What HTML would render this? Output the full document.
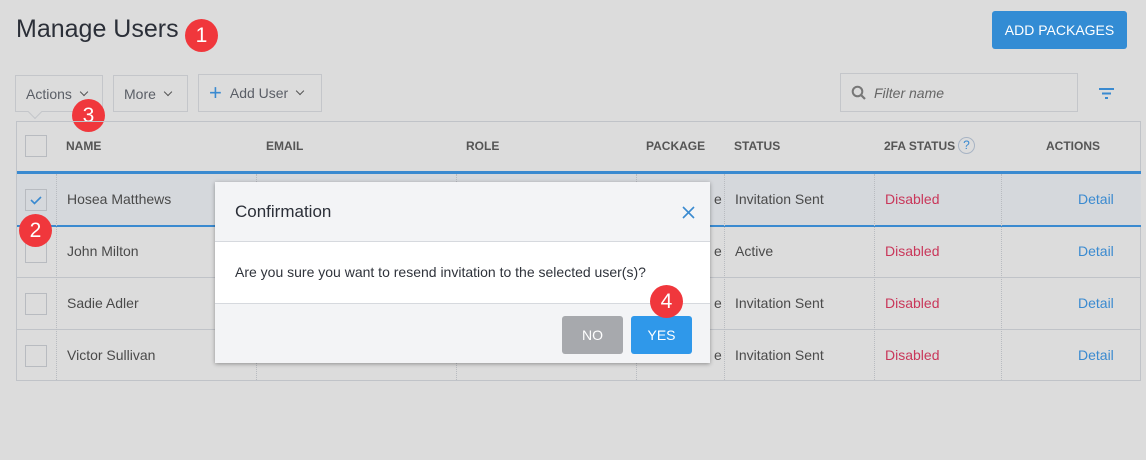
<!DOCTYPE html>
<html><head><style>
*{box-sizing:border-box;margin:0;padding:0}
body{width:1146px;height:460px;background:#dcdcdc;font-family:"Liberation Sans",sans-serif;position:relative;overflow:hidden;color:#4a4a4a}
.a{position:absolute}
.btn{position:absolute;border:1px solid #c4c6ca;height:37px;font-size:14px;color:#5a5e66;display:flex;align-items:center;padding:0 10px}
.chev{display:inline-block;width:6px;height:6px;border-right:1.5px solid #555;border-bottom:1.5px solid #555;transform:rotate(45deg);margin-left:9px;margin-top:-4px}
.th{position:absolute;top:139px;font-size:12px;font-weight:bold;color:#555}
.cell{position:absolute;font-size:14px}
.vl{position:absolute;top:174px;height:206px;border-left:1px dotted #b8bbc0}
.hl{position:absolute;left:16px;width:1125px;height:1px;background:#c0c3c8}
.cb{position:absolute;left:25px;width:22px;height:22px;border:1px solid #b8bbc0}
.badge{position:absolute;width:33px;height:33px;border-radius:50%;background:#f0373c;color:#fff;font-size:21px;text-align:center;line-height:33px}
.dis{color:#c9375a}.det{color:#3a8ad0}
</style></head><body>
<div class="a" style="left:16px;top:15px;font-size:25px;color:#2b2f38">Manage Users</div>
<div class="badge" style="left:185px;top:19px">1</div>
<div class="a" style="left:992px;top:11px;width:135px;height:38px;background:#338cd4;border-radius:3px;color:#fff;font-size:14px;text-align:center;line-height:38px">ADD PACKAGES</div>

<div class="btn" style="left:15px;top:75px;width:88px">Actions<span class="chev"></span></div>
<div class="a" style="left:30px;top:107px;width:10px;height:10px;background:#dcdcdc;border-right:1px solid #c4c6ca;border-bottom:1px solid #c4c6ca;transform:rotate(45deg)"></div>
<div class="btn" style="left:113px;top:75px;width:75px">More<span class="chev"></span></div>
<div class="btn" style="left:198px;top:74px;width:124px;height:38px"><span style="color:#3a8ad0;font-size:22px;margin-right:8px;line-height:1">+</span>Add User<span class="chev"></span></div>
<div class="badge" style="left:72px;top:99px">3</div>

<div class="btn" style="left:840px;top:73px;width:238px;height:39px;font-style:italic;color:#666"><svg width="16" height="16" viewBox="0 0 16 16" style="margin-right:7px"><circle cx="6.5" cy="6.5" r="4.8" fill="none" stroke="#777" stroke-width="2"/><path d="M10 10l4 4" stroke="#777" stroke-width="2.2"/></svg>Filter name</div>
<svg class="a" style="left:1099px;top:88px" width="16" height="12"><path d="M0 1h15M3 5.5h9M6 10h3" stroke="#3a8ad0" stroke-width="2"/></svg>

<div class="a" style="left:16px;top:121px;width:1125px;height:260px;border:1px solid #c0c3c8"></div>
<div class="a" style="left:17px;top:171px;width:1124px;height:3px;background:#3a8ad0"></div>
<div class="a" style="left:17px;top:174px;width:1124px;height:51px;background:#d5d8dc"></div>
<div class="a" style="left:17px;top:225px;width:1124px;height:2px;background:#3a8ad0"></div>
<div class="hl" style="top:277px"></div>
<div class="hl" style="top:329px"></div>
<div class="vl" style="left:56px"></div><div class="vl" style="left:256px"></div><div class="vl" style="left:456px"></div><div class="vl" style="left:636px"></div><div class="vl" style="left:724px"></div><div class="vl" style="left:874px"></div><div class="vl" style="left:1001px"></div>

<div class="cb" style="top:135px"></div>
<div class="th" style="left:66px">NAME</div><div class="th" style="left:266px">EMAIL</div><div class="th" style="left:466px">ROLE</div><div class="th" style="left:646px">PACKAGE</div><div class="th" style="left:734px">STATUS</div>
<div class="th" style="left:884px">2FA STATUS</div>
<div class="a" style="left:958px;top:137px;width:17px;height:17px;border-radius:50%;border:1px solid #a8b4c4;color:#3a8ad0;font-size:12px;text-align:center;line-height:15px">?</div>
<div class="th" style="left:1046px">ACTIONS</div>

<div class="cb" style="top:189px"><svg width="20" height="20"><path d="M5 10l3.5 3.5L15 7" fill="none" stroke="#3a8ad0" stroke-width="1.6"/></svg></div>
<div class="cb" style="top:241px"></div><div class="cb" style="top:293px"></div><div class="cb" style="top:345px"></div>

<div class="cell" style="left:67px;top:191px">Hosea Matthews</div>
<div class="cell" style="left:67px;top:243px">John Milton</div>
<div class="cell" style="left:67px;top:295px">Sadie Adler</div>
<div class="cell" style="left:67px;top:347px">Victor Sullivan</div>
<div class="cell" style="left:735px;top:191px">Invitation Sent</div>
<div class="cell" style="left:735px;top:243px">Active</div>
<div class="cell" style="left:735px;top:295px">Invitation Sent</div>
<div class="cell" style="left:735px;top:347px">Invitation Sent</div>
<div class="cell dis" style="left:885px;top:191px">Disabled</div>
<div class="cell dis" style="left:885px;top:243px">Disabled</div>
<div class="cell dis" style="left:885px;top:295px">Disabled</div>
<div class="cell dis" style="left:885px;top:347px">Disabled</div>
<div class="cell det" style="left:1078px;top:191px">Detail</div>
<div class="cell det" style="left:1078px;top:243px">Detail</div>
<div class="cell det" style="left:1078px;top:295px">Detail</div>
<div class="cell det" style="left:1078px;top:347px">Detail</div>
<div class="cell" style="left:714px;top:191px">e</div><div class="cell" style="left:714px;top:243px">e</div><div class="cell" style="left:714px;top:295px">e</div><div class="cell" style="left:714px;top:347px">e</div>

<div class="badge" style="left:19px;top:214px">2</div>

<div class="a" style="left:215px;top:182px;width:495px;height:181px;background:#f3f4f6;box-shadow:0 1px 4px rgba(0,0,0,.35)">
 <div class="a" style="left:20px;top:20px;font-size:17px;color:#2b2f38">Confirmation</div>
 <svg class="a" style="left:467px;top:24px" width="13" height="13"><path d="M1 1l11 11M12 1L1 12" stroke="#3a8ad0" stroke-width="1.6"/></svg>
 <div class="a" style="left:0;top:59px;width:495px;height:63px;background:#fff;border-top:1px solid #d6d9de;border-bottom:1px solid #d6d9de"></div>
 <div class="a" style="left:20px;top:82px;font-size:14px;color:#2f333b">Are you sure you want to resend invitation to the selected user(s)?</div>
 <div class="a" style="left:347px;top:134px;width:61px;height:38px;background:#a7a9ad;border-radius:3px;color:#fff;font-size:14px;text-align:center;line-height:38px">NO</div>
 <div class="a" style="left:416px;top:134px;width:61px;height:38px;background:#2f98ea;border-radius:3px;color:#fff;font-size:14px;text-align:center;line-height:38px">YES</div>
</div>
<div class="badge" style="left:650px;top:285px">4</div>
</body></html>
